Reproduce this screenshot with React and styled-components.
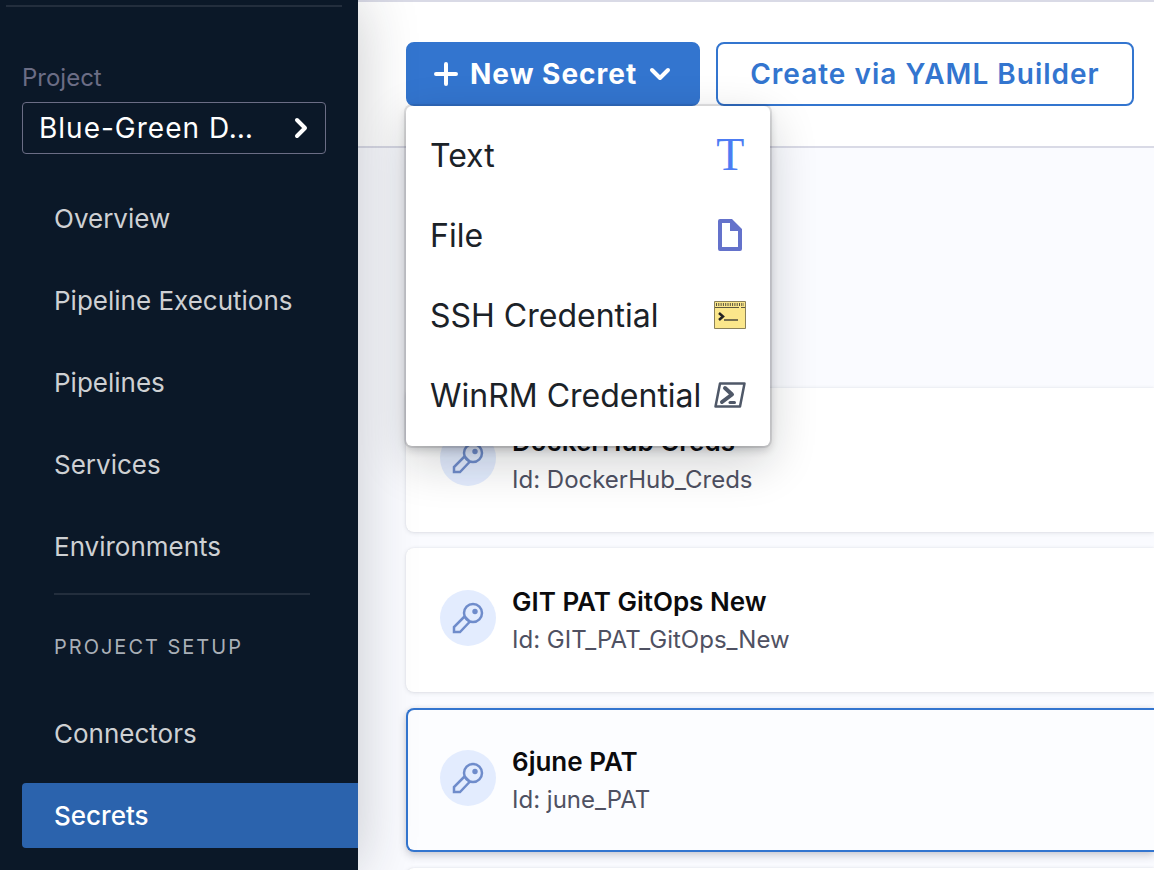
import React from 'react';
import styled, { createGlobalStyle } from 'styled-components';

const GlobalStyle = createGlobalStyle`
  * {
    box-sizing: border-box;
  }
  body {
    margin: 0;
    font-family: Inter, "Liberation Sans", sans-serif;
    background: #fafbff;
  }
  button {
    font-family: inherit;
    cursor: pointer;
  }
  svg {
    display: block;
    flex: none;
  }
`;

const Layout = styled.div`
  display: flex;
  height: 100vh;
  overflow: hidden;
`;

const SideNav = styled.nav`
  position: relative;
  z-index: 1;
  flex: none;
  width: 358px;
  padding-top: 5px;
  background: #0b1828;
  box-shadow: 0 0 56px rgba(30, 34, 42, 0.24);
`;

const TopLine = styled.hr`
  margin: 0 16px 0 6px;
  border: 0;
  border-top: 2px solid #232e3d;
`;

const ProjectPicker = styled.div`
  padding: 55px 32px 0 22px;
`;

const PickerLabel = styled.label`
  display: block;
  line-height: 32px;
  margin-bottom: 8px;
  font-size: 24px;
  color: #6b6d85;
`;

const PickerButton = styled.button`
  display: flex;
  align-items: center;
  justify-content: space-between;
  width: 100%;
  height: 52px;
  padding: 0 16px;
  border: 1px solid #6b6d85;
  border-radius: 4px;
  background: transparent;
  color: #fff;
  font-size: 28px;
  letter-spacing: 1px;
`;

const NavList = styled.ul`
  display: flex;
  flex-direction: column;
  gap: 17px;
  margin: 0;
  padding: ${(props) => (props.$first ? '32px' : '40px')} 0 0 22px;
  list-style: none;
`;

const NavLink = styled.a`
  display: block;
  padding-left: 32px;
  border-radius: 4px 0 0 4px;
  line-height: 65px;
  font-size: 26px;
  font-weight: ${(props) => (props.$active ? 500 : 400)};
  color: ${(props) => (props.$active ? '#fff' : '#ced0d3')};
  background: ${(props) => (props.$active ? '#2b63ad' : 'transparent')};
  text-decoration: none;
`;

const SectionLine = styled.hr`
  margin: 14px 48px 0 54px;
  border: 0;
  border-top: 2px solid #232e3d;
`;

const SectionTitle = styled.h2`
  margin: 38px 0 0 54px;
  line-height: 28px;
  font-size: 20px;
  font-weight: 400;
  letter-spacing: 2px;
  color: #a9afb7;
`;

const Main = styled.main`
  flex: 1;
  min-width: 0;
`;

const Toolbar = styled.header`
  display: flex;
  gap: 16px;
  padding: 40px 20px 40px 48px;
  border-top: 2px solid #d9dae6;
  border-bottom: 2px solid #d9dae6;
  background: #fff;
`;

const MenuAnchor = styled.div`
  position: relative;
  flex: none;
`;

const Button = styled.button`
  display: flex;
  align-items: center;
  justify-content: center;
  gap: 12px;
  height: 64px;
  padding: ${(props) => (props.$primary ? '0 27px 0 26px' : '0 32px')};
  border: 2px solid #3375cf;
  border-radius: 8px;
  background: ${(props) => (props.$primary ? '#3375cf' : 'transparent')};
  color: ${(props) => (props.$primary ? '#fff' : '#3375cf')};
  font-size: 28px;
  font-weight: ${(props) => (props.$primary ? 700 : 600)};
  letter-spacing: 1px;
  white-space: nowrap;
`;

const Menu = styled.ul`
  position: absolute;
  top: 100%;
  left: 0;
  z-index: 2;
  margin: 0;
  padding: 9px 0 11px;
  border-radius: 6px;
  background: #fff;
  list-style: none;
  box-shadow: 0 0 0 2px rgba(16, 22, 26, 0.1), 0 4px 8px rgba(16, 22, 26, 0.2),
    0 16px 48px rgba(16, 22, 26, 0.2);
`;

const MenuItem = styled.button`
  display: flex;
  align-items: center;
  justify-content: space-between;
  gap: 13px;
  width: 100%;
  height: 80px;
  padding: 0 24px;
  border: 0;
  background: transparent;
  color: #1b2228;
  font-size: 32px;
  white-space: nowrap;
`;

const TypeMark = styled.span`
  width: 32px;
  text-align: center;
  font-family: "Liberation Serif", serif;
  font-size: 46px;
  line-height: 48px;
  color: #4d7cf3;
`;

const SecretList = styled.ul`
  display: flex;
  flex-direction: column;
  gap: 16px;
  margin: 0;
  padding: 240px 0 0 48px;
  list-style: none;
`;

const SecretCard = styled.li`
  display: flex;
  gap: 16px;
  flex: none;
  height: 144px;
  padding: 40px 32px;
  border: 2px solid ${(props) => (props.$selected ? '#3375cf' : '#fff')};
  border-right: 0;
  border-radius: 8px 0 0 8px;
  background: ${(props) => (props.$selected ? '#fcfdff' : '#fff')};
  box-shadow: ${(props) =>
    props.$selected
      ? '0 4px 8px rgba(40, 41, 61, 0.2), 0 0 4px rgba(40, 41, 61, 0.08)'
      : '0 1px 4px rgba(96, 97, 112, 0.16), 0 0 2px rgba(40, 41, 61, 0.08)'};
`;

const KeyBadge = styled.div`
  display: flex;
  align-items: center;
  justify-content: center;
  flex: none;
  width: 56px;
  height: 56px;
  border-radius: 50%;
  background: #e3ecfe;
`;

const SecretText = styled.div`
  display: flex;
  flex-direction: column;
  gap: 14px;
`;

const SecretName = styled.h3`
  margin: 0;
  line-height: 24px;
  font-size: 26px;
  font-weight: 600;
  color: #0b0b0d;
`;

const SecretId = styled.p`
  margin: 0;
  line-height: 24px;
  font-size: 24px;
  color: #4f5162;
`;

const Chevron = ({ right }) => (
  <svg width={right ? 16 : 22} height={right ? 22 : 14} viewBox={right ? '0 0 16 22' : '0 0 22 14'} fill="none" stroke="currentColor" strokeWidth="4" strokeLinecap="round" strokeLinejoin="round">
    <path d={right ? 'M4 3l8 8-8 8' : 'M3 3l8 8 8-8'} />
  </svg>
);

const PlusIcon = () => (
  <svg width="24" height="24" viewBox="0 0 24 24" fill="none" stroke="currentColor" strokeWidth="4" strokeLinecap="round">
    <path d="M12 2v20M2 12h20" />
  </svg>
);

const FileIcon = () => (
  <svg width="32" height="32" viewBox="0 0 32 32">
    <path fill="#6472cb" fillRule="evenodd" d="M6 0h12l10 10v20a2 2 0 0 1-2 2H6a2 2 0 0 1-2-2V2a2 2 0 0 1 2-2zM8 4v24h16V12h-8V4z" />
  </svg>
);

const TerminalIcon = () => (
  <svg width="32" height="28" viewBox="0 0 32 28" fill="none">
    <path d="M.5 .5h31v27H.5z" fill="#fbe78b" stroke="#8a815a" />
    <path d="M2 3.500h28" stroke="#57523d" strokeWidth="3" strokeDasharray="1 1.300" />
    <path d="M1 6.500h24M27 6.500h4" stroke="#5d573f" />
    <path d="M5 12l4 3.500-4 3.500" stroke="#222" strokeWidth="2.500" />
    <path d="M10 19h14" stroke="#77704f" strokeWidth="2" />
  </svg>
);

const PowershellIcon = () => (
  <svg width="32" height="26" viewBox="0 0 32 26" fill="none" stroke="#4f5868" strokeLinecap="round" strokeLinejoin="round">
    <path d="M6 1.500h24.500l-4.500 23H1.500z" strokeWidth="2.500" />
    <path d="M11 6l7 6.500L8 20" strokeWidth="4" />
    <path d="M16 20.500h4.500" strokeWidth="3" />
  </svg>
);

const KeyIcon = () => (
  <svg width="32" height="32" viewBox="0 0 32 32" fill="none" stroke="#6f8ccb" strokeWidth="2.500">
    <circle cx="21" cy="11" r="9" />
    <circle cx="23" cy="9.500" r="2.700" fill="#6f8ccb" stroke="none" />
    <path d="M12.500 14.500L2 25v5h6L18 19.500" />
    <path d="M12.500 14.500l5 5" />
  </svg>
);

const projectLinks = ["Overview","Pipeline Executions","Pipelines","Services","Environments"]
const setupLinks = ["Connectors","Secrets"]

const secretTypes = [
  { label: "Text", icon: <TypeMark aria-hidden="true">T</TypeMark> },
  { label: "File", icon: <FileIcon /> },
  { label: "SSH Credential", icon: <TerminalIcon /> },
  { label: "WinRM Credential", icon: <PowershellIcon /> },
]

const secrets = [
  { name: "DockerHub Creds", id: "DockerHub_Creds" },
  { name: "GIT PAT GitOps New", id: "GIT_PAT_GitOps_New" },
  { name: "6june PAT", id: "june_PAT", selected: true },
]

const Sidebar = () => (
  <SideNav>
    <TopLine />
    <ProjectPicker>
      <PickerLabel htmlFor="project">Project</PickerLabel>
      <PickerButton id="project">
        Blue-Green D…
        <Chevron right />
      </PickerButton>
    </ProjectPicker>
    <NavList $first>
      {projectLinks.map((link) => (
        <li key={link}><NavLink href="#">{link}</NavLink></li>
      ))}
    </NavList>
    <SectionLine />
    <SectionTitle>PROJECT SETUP</SectionTitle>
    <NavList>
      {setupLinks.map((link) => (
        <li key={link}><NavLink href="#" $active={link === "Secrets"}>{link}</NavLink></li>
      ))}
    </NavList>
  </SideNav>
);

const App = () => {
  return (
    <Layout>
      <GlobalStyle />
      <Sidebar />
      <Main>
        <Toolbar>
          <MenuAnchor>
            <Button $primary aria-haspopup="true" aria-expanded="true">
              <PlusIcon />
              New Secret
              <Chevron />
            </Button>
            <Menu>
              {secretTypes.map((type) => (
                <li key={type.label}>
                  <MenuItem>
                    {type.label}
                    {type.icon}
                  </MenuItem>
                </li>
              ))}
            </Menu>
          </MenuAnchor>
          <Button>Create via YAML Builder</Button>
        </Toolbar>
        <SecretList>
          {secrets.map((secret) => (
            <SecretCard key={secret.id} $selected={secret.selected}>
              <KeyBadge><KeyIcon /></KeyBadge>
              <SecretText>
                <SecretName>{secret.name}</SecretName>
                <SecretId>Id: {secret.id}</SecretId>
              </SecretText>
            </SecretCard>
          ))}
          <SecretCard />
        </SecretList>
      </Main>
    </Layout>
  );
}

export default App;
